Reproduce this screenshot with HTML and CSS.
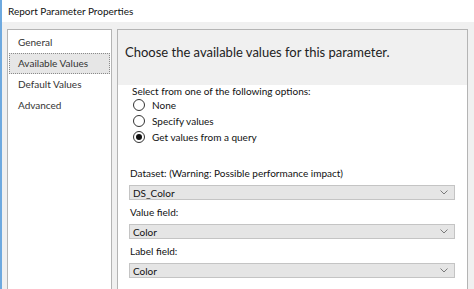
FILE: index.html
```html
<!DOCTYPE html>
<html lang="en">
<head>
    <meta charset="UTF-8">
    <title>Report Parameter Properties</title>
    <link rel="stylesheet" href="styles.css">
</head>
<body>
    <div class="window">
        <div class="title-bar">Report Parameter Properties</div>

        <div class="dialog-body">
            <!-- Left navigation -->
            <ul class="nav">
                <li>General</li>
                <li class="selected">Available Values</li>
                <li>Default Values</li>
                <li>Advanced</li>
            </ul>

            <!-- Right page -->
            <div class="page">
                <div class="page-header">Choose the available values for this parameter.</div>
                <div class="page-content">
                    <div class="prompt">Select from one of the following options:</div>
                    <label class="radio"><span class="radio-dot"></span>None</label>
                    <label class="radio"><span class="radio-dot"></span>Specify values</label>
                    <label class="radio"><span class="radio-dot checked"></span>Get values from a query</label>

                    <div class="fields">
                        <div class="field-label">Dataset: (Warning: Possible performance impact)</div>
                        <div class="combo">
                            <span>DS_Color</span>
                            <svg class="chevron" width="8" height="5" viewBox="0 0 8 5"><path d="M0.5 0.5 L4 4 L7.5 0.5" fill="none" stroke="#7a7a7a" stroke-width="1"/></svg>
                        </div>
                        <div class="field-label">Value field:</div>
                        <div class="combo">
                            <span>Color</span>
                            <svg class="chevron" width="8" height="5" viewBox="0 0 8 5"><path d="M0.5 0.5 L4 4 L7.5 0.5" fill="none" stroke="#7a7a7a" stroke-width="1"/></svg>
                        </div>
                        <div class="field-label">Label field:</div>
                        <div class="combo">
                            <span>Color</span>
                            <svg class="chevron" width="8" height="5" viewBox="0 0 8 5"><path d="M0.5 0.5 L4 4 L7.5 0.5" fill="none" stroke="#7a7a7a" stroke-width="1"/></svg>
                        </div>
                    </div>
                </div>
            </div>
        </div>
    </div>
</body>
</html>
```

FILE: styles.css
```css
/* Base */
body {
    margin: 0;
    padding: 0;
    font-family: Lato, "Noto Sans", sans-serif;
    font-size: 10px;
    color: #111;
    background-color: #f0f0f0;
}

.window {
    width: 472px;
    height: 289px;
    overflow: hidden;
    border-left: 2px solid #6ea9df;
    background-color: #f0f0f0;
}

.title-bar {
    height: 22px;
    line-height: 22px;
    padding-left: 6px;
    background-color: #ffffff;
    font-size: 10px;
    color: #111;
}

.dialog-body {
    display: flex;
    gap: 5px;
    padding: 7px 0 0 5px;
}

/* Navigation */
.nav {
    list-style: none;
    margin: 0;
    padding: 2px 0 0;
    width: 103px;
    height: 300px;
    background-color: #ffffff;
    border: 1px solid #b4b4b4;
}

.nav li {
    height: 21px;
    line-height: 21px;
    padding-left: 9px;
    margin: 0 1px;
    color: #333;
}

.nav li.selected {
    height: 19px;
    line-height: 19px;
    padding-left: 8px;
    background-color: #e6e6e6;
    border: 1px dotted #8a8a8a;
}

/* Page */
.page {
    width: 349px;
    height: 300px;
    background-color: #ffffff;
    border: 1px solid #b4b4b4;
}

.page-header {
    height: 55px;
    line-height: 44px;
    padding-left: 7px;
    background-color: #f0f0f0;
    font-size: 13px;
    color: #222;
}

.page-content {
    padding: 0 12px 0 11px;
}

.prompt {
    line-height: 12px;
    padding-left: 3px;
}

.radio {
    display: flex;
    align-items: center;
    gap: 7px;
    height: 16px;
    padding-left: 4px;
}

.radio-dot {
    width: 10px;
    height: 10px;
    border: 1px solid #333;
    border-radius: 50%;
    display: flex;
    align-items: center;
    justify-content: center;
}

.radio-dot.checked::after {
    content: "";
    width: 6px;
    height: 6px;
    border-radius: 50%;
    background-color: #111;
}

.fields {
    margin-top: 21px;
}

.field-label {
    line-height: 14px;
    margin-bottom: 5px;
    padding-left: 1px;
}

.combo {
    display: flex;
    align-items: center;
    justify-content: space-between;
    height: 13px;
    margin-bottom: 5px;
    padding: 0 6px 0 3px;
    background-color: #e5e5e5;
    border: 1px solid #c4c4c4;
}

.chevron {
    display: block;
}
```
